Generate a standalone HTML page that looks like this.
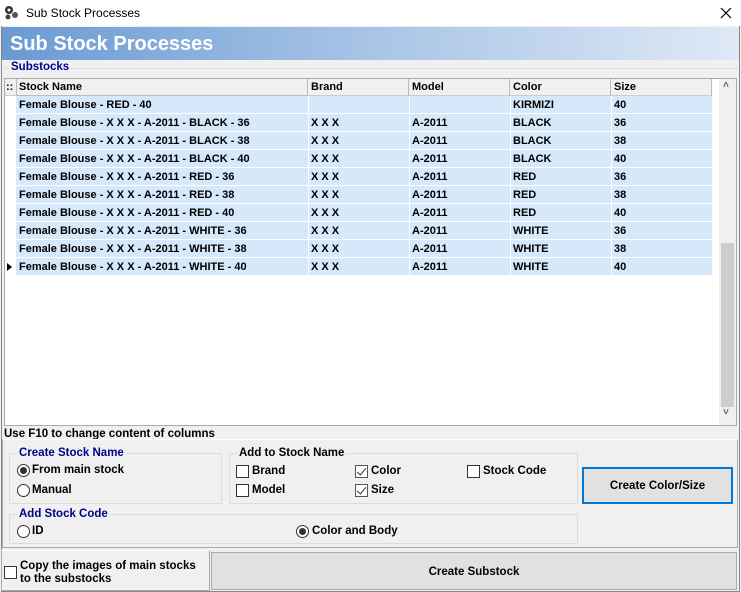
<html><head><style>
*{box-sizing:border-box;margin:0;padding:0}
body{width:741px;height:592px;background:#f0f0f0;font-family:"Liberation Sans",sans-serif;font-size:11px;font-weight:bold;position:relative;overflow:hidden;color:#000}
.a{position:absolute}
.row{position:absolute;left:16px;width:696px;height:18px;background:#d5e9fb;border-bottom:1px solid #fff}
.row span{position:absolute;top:3px}
.c{position:absolute;border-left:1px solid #fff;top:0;height:18px}
.hd span{position:absolute;top:2px}
.gb{position:absolute;border:1px solid #dcdcdc}
.gl{position:absolute;top:-8px;left:7px;background:#f0f0f0;padding:0 2px;color:#00008b;font-size:11.5px}
.rb{position:absolute;width:13px;height:13px;border:1px solid #333;border-radius:50%;background:#fff}
.rb.on::after{content:"";position:absolute;left:2px;top:2px;width:7px;height:7px;border-radius:50%;background:#333}
.cb{position:absolute;width:13px;height:13px;border:1px solid #333;background:#fff}
.cb.on{border-color:#555}
.cb.on::after{content:"";position:absolute;left:3px;top:0px;width:4px;height:8px;border:solid #333;border-width:0 1.3px 1.3px 0;transform:rotate(40deg)}
.t{position:absolute;font-size:11.5px;margin-top:1px}
</style></head><body>
<div class="a" style="left:0;top:0;width:741px;height:26px;background:#fff"></div>
<svg class="a" style="left:4px;top:5px" width="16" height="16"><circle cx="5" cy="5" r="4" fill="#333"/><circle cx="5" cy="5" r="1.5" fill="#fff"/><circle cx="11" cy="10" r="3" fill="#555"/><circle cx="4" cy="12" r="2.5" fill="#444"/></svg>
<div class="a" style="left:26px;top:6px;font-weight:normal;font-size:12px">Sub Stock Processes</div>
<svg class="a" style="left:720px;top:7px" width="12" height="12"><path d="M1 1L11 11M11 1L1 11" stroke="#000" stroke-width="1.2"/></svg>
<div class="a" style="left:1px;top:26px;width:739px;height:566px;border:1px solid #888;border-top:none"></div>
<div class="a" style="left:2px;top:27px;width:737px;height:33px;background:linear-gradient(90deg,#6a9ad3,#a8c4e6 50%,#dfe9f6)"></div>
<div class="a" style="left:10px;top:33px;color:#fff;font-size:20px">Sub Stock Processes</div>
<div class="a" style="left:4px;top:68px;width:734px;border-top:1px solid #dcdcdc"></div>
<div class="a" style="left:9px;top:61px;background:#f0f0f0;padding:0 2px;color:#00008b;font-size:11.5px">Substocks</div>
<div class="a" style="left:4px;top:78px;width:733px;height:348px;background:#fff;border:1px solid #aaa"></div>
<div class="a hd" style="left:5px;top:79px;width:707px;height:17px;background:#f0f0f0;border-bottom:1px solid #ccc">
<span style="left:1px">::</span>
<div class="a" style="left:11px;top:0;width:292px;height:17px;border:1px solid #bbb;border-top:none"></div><span style="left:14px">Stock Name</span>
<div class="a" style="left:303px;top:0;width:101px;height:17px;border-right:1px solid #bbb"></div><span style="left:306px">Brand</span>
<div class="a" style="left:404px;top:0;width:101px;height:17px;border-right:1px solid #bbb"></div><span style="left:407px">Model</span>
<div class="a" style="left:505px;top:0;width:101px;height:17px;border-right:1px solid #bbb"></div><span style="left:508px">Color</span>
<div class="a" style="left:606px;top:0;width:101px;height:17px;border-right:1px solid #bbb"></div><span style="left:609px">Size</span>
</div>
<div class="a" style="left:719px;top:79px;width:17px;height:346px;background:#f0f0f0"></div>
<div class="a" style="left:721px;top:243px;width:13px;height:164px;background:#cdcdcd"></div>
<div class="a" style="left:723px;top:80px;font-size:10px;color:#666">˄</div>
<div class="a" style="left:723px;top:407px;font-size:10px;color:#666">˅</div>
<div id="rows"></div>
<script>
var d=[["Female Blouse - RED - 40","","","KIRMIZI","40"]];
var cs=["BLACK","RED","WHITE"];cs.forEach(function(c){["36","38","40"].forEach(function(s){d.push(["Female Blouse - X X X - A-2011 - "+c+" - "+s,"X X X","A-2011",c,s])})});
var h="";d.forEach(function(r,i){var t=96+18*i;h+='<div class="row" style="top:'+t+'px"><span style="left:3px">'+r[0]+'</span><div class="c" style="left:292px"></div><span style="left:295px">'+r[1]+'</span><div class="c" style="left:393px"></div><span style="left:396px">'+r[2]+'</span><div class="c" style="left:494px"></div><span style="left:497px">'+r[3]+'</span><div class="c" style="left:595px"></div><span style="left:598px">'+r[4]+'</span></div>';});
h+='<div class="a" style="left:7px;top:263px;width:0;height:0;border:4px solid transparent;border-left:5px solid #000"></div>';
document.getElementById("rows").innerHTML=h;
</script>
<div class="a" style="left:4px;top:428px;font-size:11.5px">Use F10 to change content of columns</div>
<div class="a" style="left:2px;top:439px;width:736px;height:109px;border:1px solid #aaa;border-top-color:#fff"></div>
<div class="gb" style="left:9px;top:453px;width:213px;height:51px"><div class="gl" style="top:-7px">Create Stock Name</div></div>
<div class="rb on" style="left:17px;top:464px"></div><div class="t" style="left:32px;top:463px">From main stock</div>
<div class="rb" style="left:17px;top:484px"></div><div class="t" style="left:32px;top:483px">Manual</div>
<div class="gb" style="left:229px;top:453px;width:349px;height:51px"><div class="gl" style="color:#000;top:-7px">Add to Stock Name</div></div>
<div class="cb" style="left:236px;top:465px"></div><div class="t" style="left:252px;top:464px">Brand</div>
<div class="cb" style="left:236px;top:484px"></div><div class="t" style="left:252px;top:483px">Model</div>
<div class="cb on" style="left:355px;top:465px"></div><div class="t" style="left:371px;top:464px">Color</div>
<div class="cb on" style="left:355px;top:484px"></div><div class="t" style="left:371px;top:483px">Size</div>
<div class="cb" style="left:467px;top:465px"></div><div class="t" style="left:483px;top:464px">Stock Code</div>
<div class="a" style="left:582px;top:467px;width:151px;height:37px;border:2px solid #0078d7;background:#e1e1e1;text-align:center;line-height:35px;font-size:11.5px">Create Color/Size</div>
<div class="gb" style="left:9px;top:514px;width:569px;height:30px"><div class="gl" style="top:-7px">Add Stock Code</div></div>
<div class="rb" style="left:17px;top:525px"></div><div class="t" style="left:32px;top:524px">ID</div>
<div class="rb on" style="left:296px;top:525px"></div><div class="t" style="left:312px;top:524px">Color and Body</div>
<div class="a" style="left:1px;top:550px;width:209px;height:41px;border:1px solid #aaa;border-top-color:#fff"></div>
<div class="cb" style="left:4px;top:566px"></div>
<div class="t" style="left:20px;top:559px;line-height:13px">Copy the images of main stocks<br>to the substocks</div>
<div class="a" style="left:211px;top:552px;width:526px;height:38px;border:1px solid #aaa;background:#e1e1e1;text-align:center;line-height:38px;font-size:11.5px">Create Substock</div>
</body></html>
